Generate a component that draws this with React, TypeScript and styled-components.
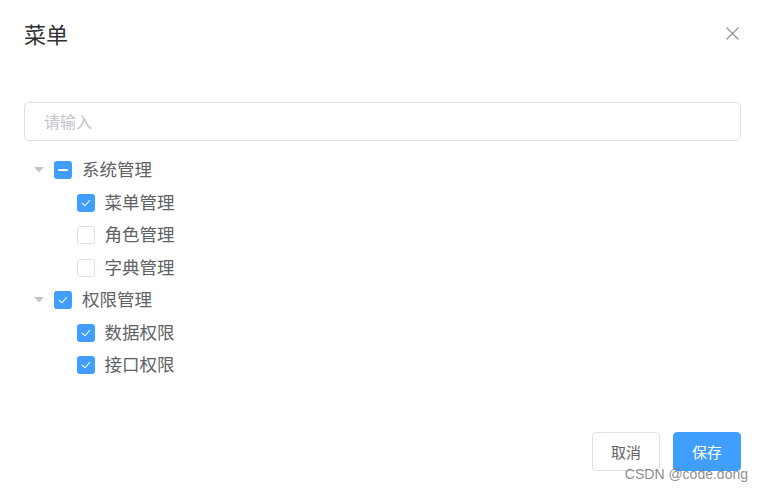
import React from 'react';
import styled, { createGlobalStyle } from 'styled-components';

const GlobalStyle = createGlobalStyle`
  html, body {
    margin: 0;
    padding: 0;
    background: #ffffff;
    font-family: "Liberation Sans", "Noto Sans CJK SC", sans-serif;
  }
`;

const Dialog = styled.div`
  position: relative;
  width: 764px;
  height: 491px;
  background: #fff;
  display: flex;
  flex-direction: column;
  box-sizing: border-box;
`;

const Header = styled.div`
  display: flex;
  justify-content: space-between;
  align-items: center;
  padding: 21px 24px 0 24px;
  height: 30px;
`;

const Title = styled.span`
  font-size: 22px;
  line-height: 30px;
  color: #303133;
`;

const CloseButton = styled.button`
  border: none;
  background: none;
  padding: 0;
  width: 16px;
  height: 16px;
  display: flex;
  align-items: center;
  justify-content: center;
  cursor: pointer;
  margin-right: 0;
  margin-top: -6px;
`;

const Body = styled.div`
  flex: 1;
  padding: 51px 23px 0 24px;
`;

const SearchInput = styled.input`
  box-sizing: border-box;
  width: 100%;
  height: 39px;
  border: 1px solid #dcdfe6;
  border-radius: 5px;
  padding: 2px 19px 0;
  font-size: 16px;
  color: #606266;
  font-family: inherit;
  outline: none;

  &::placeholder {
    color: #c0c4cc;
  }
`;

const Tree = styled.div`
  margin-top: 13px;
`;

const Node = styled.div<{ $level: number }>`
  display: flex;
  align-items: center;
  height: 32.5px;
  padding-left: ${p => p.$level * 22.5}px;
  font-size: 17.5px;
  color: #606266;
`;

const Expander = styled.span<{ $visible: boolean }>`
  width: 30px;
  height: 30px;
  display: flex;
  align-items: center;
  justify-content: center;
  visibility: ${p => (p.$visible ? 'visible' : 'hidden')};
`;

const Box = styled.span<{ $on: boolean }>`
  box-sizing: border-box;
  width: 18px;
  height: 18px;
  border-radius: 2.5px;
  border: 1px solid ${p => (p.$on ? '#409eff' : '#dcdfe6')};
  background: ${p => (p.$on ? '#409eff' : '#fff')};
  display: flex;
  align-items: center;
  justify-content: center;
  margin-right: 10px;
`;

const Dash = styled.span`
  width: 10px;
  height: 2px;
  background: #fff;
  border-radius: 1px;
`;

const Label = styled.span`
  line-height: 20px;
`;

const Footer = styled.div`
  display: flex;
  justify-content: flex-end;
  gap: 13px;
  padding: 0 23px 20px 0;
`;

const Button = styled.button<{ $primary?: boolean }>`
  box-sizing: border-box;
  width: 68px;
  height: 39px;
  border-radius: 4px;
  font-size: 15px;
  font-family: inherit;
  cursor: pointer;
  border: 1px solid ${p => (p.$primary ? '#409eff' : '#dcdfe6')};
  background: ${p => (p.$primary ? '#409eff' : '#fff')};
  color: ${p => (p.$primary ? '#fff' : '#606266')};
`;

const Watermark = styled.span`
  position: absolute;
  right: 16px;
  bottom: 9px;
  font-size: 14px;
  color: rgba(120, 120, 120, 0.85);
  font-family: "Liberation Sans", sans-serif;
  pointer-events: none;
`;

type State = 'on' | 'off' | 'half';

type TreeNode = { label: string; level: number; state: State; parent?: boolean };

const nodes: TreeNode[] = [
  { label: '系统管理', level: 0, state: 'half', parent: true },
  { label: '菜单管理', level: 1, state: 'on' },
  { label: '角色管理', level: 1, state: 'off' },
  { label: '字典管理', level: 1, state: 'off' },
  { label: '权限管理', level: 0, state: 'on', parent: true },
  { label: '数据权限', level: 1, state: 'on' },
  { label: '接口权限', level: 1, state: 'on' },
];

const Caret = () => (
  <svg width="10" height="6" viewBox="0 0 10 6">
    <path d="M0 0 L10 0 L5 5.5 Z" fill="#c0c4cc" />
  </svg>
);

const Check = () => (
  <svg width="12" height="10" viewBox="0 0 12 10">
    <path d="M2 5 L5 7.8 L10 2" fill="none" stroke="#fff" strokeWidth="1.1" />
  </svg>
);

const App: React.FC = () => (
  <>
    <GlobalStyle />
    <Dialog>
      <Header>
        <Title>菜单</Title>
        <CloseButton aria-label="关闭">
          <svg width="13" height="13" viewBox="0 0 13 13">
            <path d="M0.5 0.5 L12.5 12.5 M12.5 0.5 L0.5 12.5" stroke="#909399" strokeWidth="1.2" />
          </svg>
        </CloseButton>
      </Header>
      <Body>
        <SearchInput placeholder="请输入" />
        <Tree>
          {nodes.map(n => (
            <Node key={n.label} $level={n.level}>
              <Expander $visible={!!n.parent}>
                <Caret />
              </Expander>
              <Box $on={n.state !== 'off'}>
                {n.state === 'on' && <Check />}
                {n.state === 'half' && <Dash />}
              </Box>
              <Label>{n.label}</Label>
            </Node>
          ))}
        </Tree>
      </Body>
      <Footer>
        <Button>取消</Button>
        <Button $primary>保存</Button>
      </Footer>
      <Watermark>CSDN @code.dong</Watermark>
    </Dialog>
  </>
);

export default App;
